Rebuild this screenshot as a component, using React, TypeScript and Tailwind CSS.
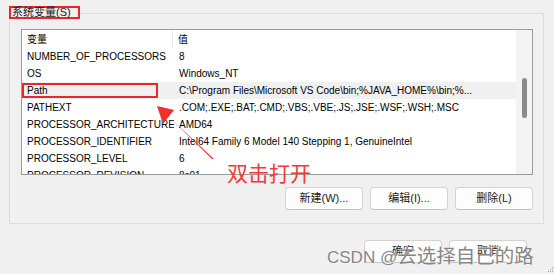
const rows: [string, string][] = [
  ["NUMBER_OF_PROCESSORS", "8"],
  ["OS", "Windows_NT"],
  ["Path", "C:\\Program Files\\Microsoft VS Code\\bin;%JAVA_HOME%\\bin;%..."],
  ["PATHEXT", ".COM;.EXE;.BAT;.CMD;.VBS;.VBE;.JS;.JSE;.WSF;.WSH;.MSC"],
  ["PROCESSOR_ARCHITECTURE", "AMD64"],
  ["PROCESSOR_IDENTIFIER", "Intel64 Family 6 Model 140 Stepping 1, GenuineIntel"],
  ["PROCESSOR_LEVEL", "6"],
  ["PROCESSOR_REVISION", "8c01"],
];

function WinButton({ label }: { label: string }) {
  return (
    <button className="w-[78px] h-[23px] rounded-[4px] border border-[#d3d3d3] border-b-[#c2c2c2] bg-[#fdfdfd] text-[11px] text-[#1b1b1b] leading-none">
      {label}
    </button>
  );
}

export default function App() {
  return (
    <div className="relative w-[554px] h-[274px] overflow-hidden bg-[#f0f0f0] font-['Liberation_Sans','Noto_Sans_CJK_SC',sans-serif] text-black">
      {/* 系统变量 group box */}
      <div className="ml-[9px] mt-[13px] w-[535px] h-[211px] border border-[#dcdcdc]">
        <div className="-mt-[8px] -ml-px w-[71px] h-[13px] border-2 border-[#e8262b] bg-[#f0f0f0] pl-[1px] text-[11px] leading-[9px] text-[#1a1a1a]">
          系统变量(S)
        </div>

        {/* list view */}
        <div className="ml-[11px] mt-[10px] w-[512px] h-[146px] border border-[#9a9a9a] bg-white flex overflow-hidden">
          <div className="flex-1 text-[10px]">
            <div className="flex h-[18px] items-center">
              <div className="w-[151px] h-full flex items-center px-[5px] border-r border-[#ececec]">变量</div>
              <div className="px-[5px]">值</div>
            </div>
            {rows.map(([name, value]) => (
              <div
                key={name}
                className={`relative flex h-[17px] items-center whitespace-nowrap ${name === "Path" ? "bg-[#f0f0f0]" : ""}`}
              >
                <div className="w-[152px] px-[5px] overflow-hidden">{name}</div>
                <div className="px-[5px]">{value}</div>
                {name === "Path" && (
                  <div className="absolute left-0 top-[1px] w-[136px] h-[15px] border-2 border-[#e8262b]" />
                )}
              </div>
            ))}
          </div>
          {/* scrollbar */}
          <div className="w-[16px] bg-[#f3f3f3] pt-[48px] pl-[6px]">
            <div className="w-[5px] h-[40px] rounded-full bg-[#8a8a8a]" />
          </div>
        </div>

        <div className="mt-[12px] pr-[10px] flex justify-end gap-[7px]">
          <WinButton label="新建(W)..." />
          <WinButton label="编辑(I)..." />
          <WinButton label="删除(L)" />
        </div>
      </div>

      <div className="mt-[16px] pr-[27px] flex justify-end gap-[7px]">
        <WinButton label="确定" />
        <WinButton label="取消" />
      </div>

      {/* annotation arrow */}
      <svg className="absolute left-0 top-0 pointer-events-none" width="554" height="274" viewBox="0 0 554 274">
        <polygon points="157,106 174,110 163,124" fill="#f0302f" />
        <polygon points="166,114 169,117 214,159 212,159" fill="#f0302f" />
      </svg>
      <div className="absolute left-[227px] top-[162px] text-[21px] leading-none text-[#f2383a] font-['Noto_Sans_CJK_SC',sans-serif]">
        双击打开
      </div>

      {/* watermark */}
      <div className="absolute left-[327px] top-[245px] whitespace-nowrap text-[#858585] [text-shadow:0_0_2px_#fff,0_0_1px_#fff] leading-none">
        <span className="text-[17px] font-['Liberation_Sans',sans-serif]">CSDN @</span>
        <span className="text-[19.5px] font-['Noto_Sans_CJK_SC',sans-serif]">去选择自己的路</span>
      </div>

      {/* resize grip */}
      <svg className="absolute right-0 bottom-0" width="8" height="8" viewBox="0 0 8 8">
        <rect x="6" y="1" width="1" height="1" fill="#a0a0a0" />
        <rect x="4" y="3" width="1" height="1" fill="#a0a0a0" />
        <rect x="6" y="3" width="1" height="1" fill="#a0a0a0" />
        <rect x="2" y="5" width="1" height="1" fill="#a0a0a0" />
        <rect x="4" y="5" width="1" height="1" fill="#a0a0a0" />
        <rect x="6" y="5" width="1" height="1" fill="#a0a0a0" />
      </svg>
    </div>
  );
}
